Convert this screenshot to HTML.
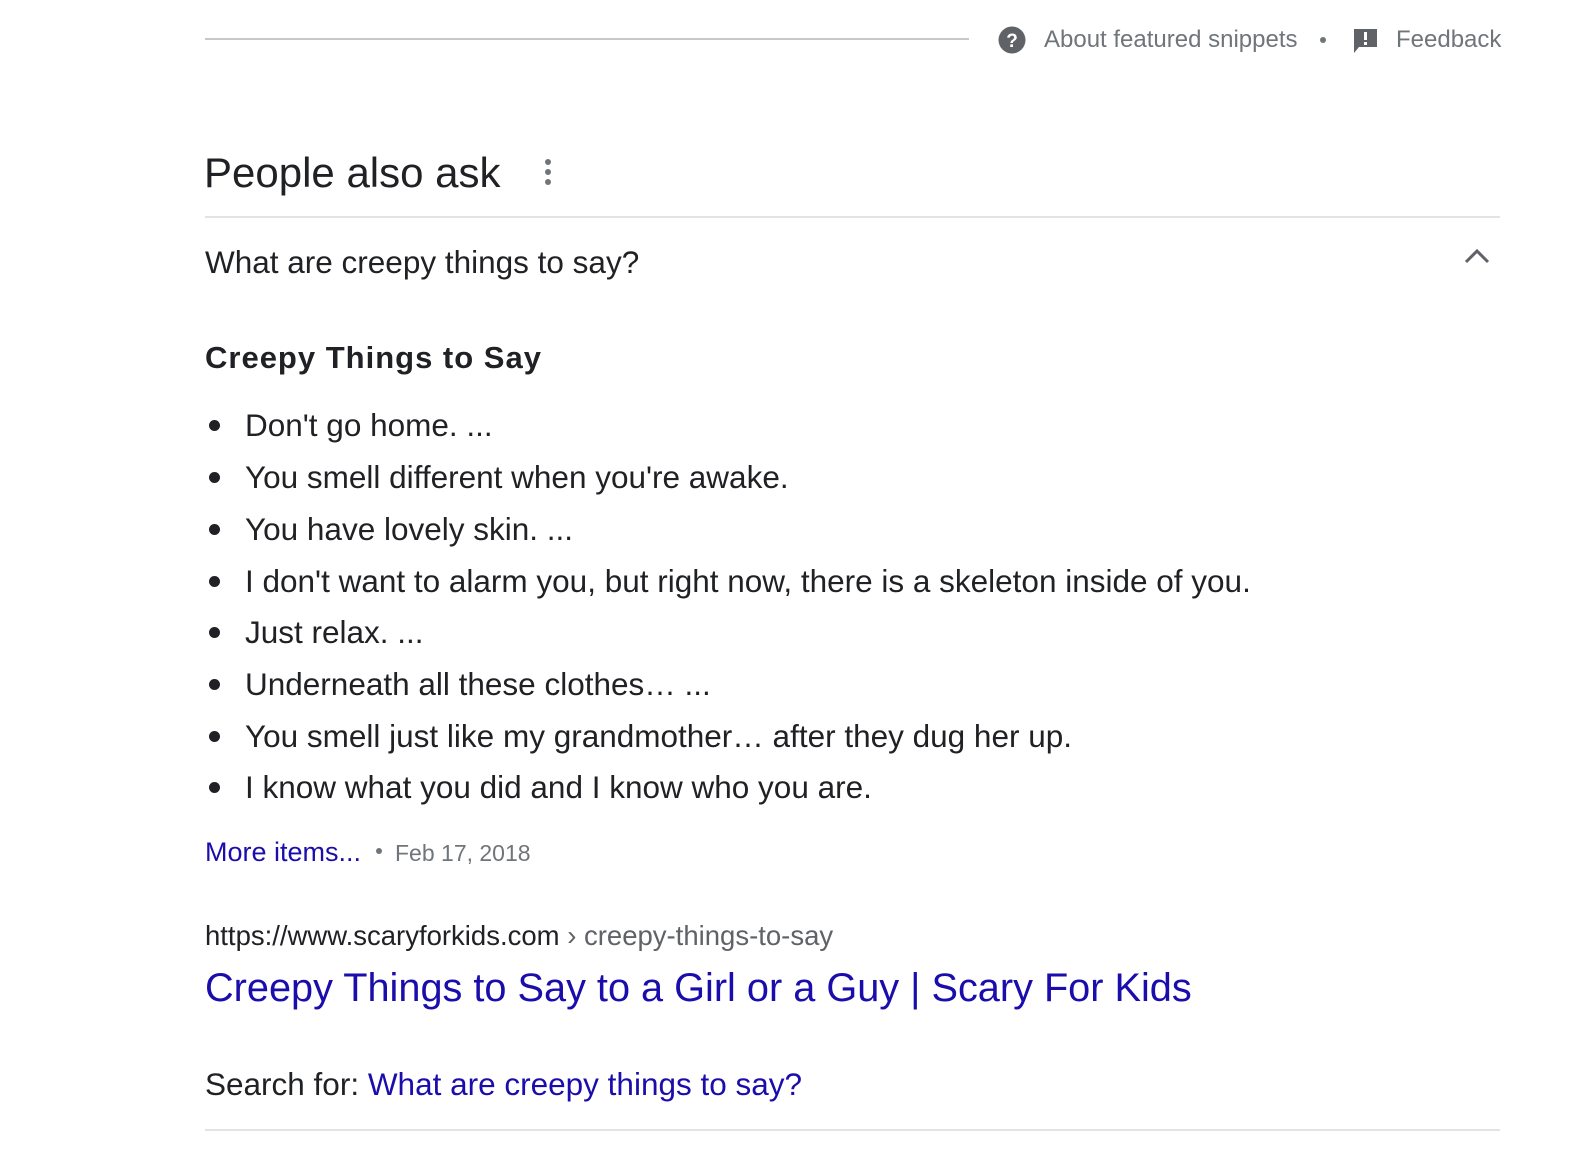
<!DOCTYPE html>
<html><head><meta charset="utf-8"><style>
body{margin:0;width:1578px;height:1165px;background:#fff;font-family:"Liberation Sans",Arial,sans-serif;color:#202124;position:relative;overflow:hidden}
.a{position:absolute;white-space:nowrap;line-height:1}
.hr{position:absolute;height:2px;background:#dadce0}
.li{position:absolute;left:245px;font-size:31.5px;line-height:1;white-space:nowrap}
.dot{position:absolute;left:209px;width:11px;height:11px;border-radius:50%;background:#202124}
</style></head><body>
<div class="hr" style="left:205px;top:38px;width:764px;background:#c8c8c8"></div>
<svg class="a" style="left:998px;top:26px" width="28" height="28" viewBox="0 0 28 28"><circle cx="14" cy="14" r="13.5" fill="#5f6368"/><text x="14" y="21" text-anchor="middle" font-family="Liberation Sans" font-weight="bold" font-size="19" fill="#fff">?</text></svg>
<div class="a" style="left:1044px;top:28px;font-size:24px;color:#70757a">About featured snippets</div>
<div class="a" style="left:1320px;top:37px;width:6px;height:6px;border-radius:50%;background:#70757a"></div>
<svg class="a" style="left:1353px;top:28px" width="25" height="26" viewBox="0 0 25 26"><path d="M1 1h23v18H6l-5 6z" fill="#5f6368"/><rect x="11" y="4" width="3" height="8" fill="#fff"/><rect x="11" y="14" width="3" height="3" fill="#fff"/></svg>
<div class="a" style="left:1396px;top:28px;font-size:24px;color:#70757a">Feedback</div>

<div class="a" style="left:204px;top:152px;font-size:42px;color:#202124">People also ask</div>
<div class="a" style="left:545px;top:159px;width:6px;height:6px;border-radius:50%;background:#70757a"></div>
<div class="a" style="left:545px;top:169px;width:6px;height:6px;border-radius:50%;background:#70757a"></div>
<div class="a" style="left:545px;top:179px;width:6px;height:6px;border-radius:50%;background:#70757a"></div>
<div class="hr" style="left:205px;top:216px;width:1295px;background:#e3e3e3"></div>
<div class="a" style="left:205px;top:247px;font-size:31.5px">What are creepy things to say?</div>
<svg class="a" style="left:1463px;top:246px" width="28" height="20" viewBox="0 0 28 20"><path d="M3 16L14 5l11 11" stroke="#5f6368" stroke-width="3" fill="none"/></svg>

<div class="a" style="left:205px;top:342px;font-size:31px;letter-spacing:1px;font-weight:bold;color:#202124">Creepy Things to Say</div>

<div class="dot" style="top:420px"></div><div class="li" style="top:410px">Don't go home. ...</div>
<div class="dot" style="top:472px"></div><div class="li" style="top:462px">You smell different when you're awake.</div>
<div class="dot" style="top:524px"></div><div class="li" style="top:514px">You have lovely skin. ...</div>
<div class="dot" style="top:576px"></div><div class="li" style="top:566px">I don't want to alarm you, but right now, there is a skeleton inside of you.</div>
<div class="dot" style="top:627px"></div><div class="li" style="top:617px">Just relax. ...</div>
<div class="dot" style="top:679px"></div><div class="li" style="top:669px">Underneath all these clothes… ...</div>
<div class="dot" style="top:731px"></div><div class="li" style="top:721px">You smell just like my grandmother… after they dug her up.</div>
<div class="dot" style="top:782px"></div><div class="li" style="top:772px">I know what you did and I know who you are.</div>

<div class="a" style="left:205px;top:839px;font-size:27px;color:#1a0dab">More items...</div>
<div class="a" style="left:376px;top:848px;width:6px;height:6px;border-radius:50%;background:#70757a"></div>
<div class="a" style="left:395px;top:842px;font-size:23px;color:#70757a">Feb 17, 2018</div>

<div class="a" style="left:205px;top:922px;font-size:27.5px;color:#202124">https://www.scaryforkids.com <span style="color:#5f6368">› creepy-things-to-say</span></div>
<div class="a" style="left:205px;top:969px;font-size:39.7px;color:#1a0dab">Creepy Things to Say to a Girl or a Guy | Scary For Kids</div>

<div class="a" style="left:205px;top:1069px;font-size:31.5px;color:#202124">Search for: <span style="color:#1a0dab">What are creepy things to say?</span></div>
<div class="hr" style="left:205px;top:1129px;width:1295px;background:#e3e3e3"></div>
</body></html>
